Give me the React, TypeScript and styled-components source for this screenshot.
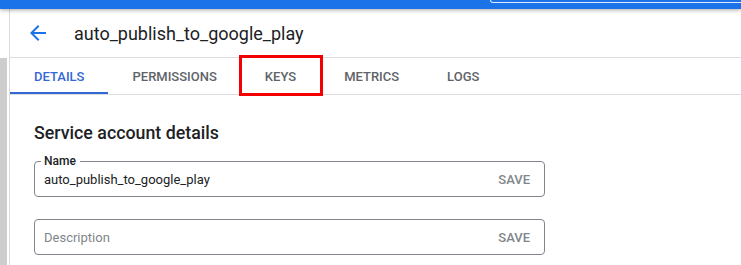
import React from 'react';
import styled, { createGlobalStyle } from 'styled-components';

const GlobalStyle = createGlobalStyle`
  html, body {
    margin: 0;
    padding: 0;
    background: #fff;
    font-family: Roboto, "Liberation Sans", Arial, sans-serif;
    color: #202124;
  }
  #root {
    height: 265px;
    overflow: hidden;
  }
`;

const Page = styled.div`
  display: flex;
  flex-direction: column;
  height: 265px;
`;

const TopBar = styled.div`
  position: relative;
  z-index: 2;
  display: flex;
  align-items: flex-start;
  height: 9px;
  padding-left: 490px;
  background: #1a73e8;
  box-shadow: 0 1px 4px rgba(0, 0, 0, 0.35);
`;

const SearchEdge = styled.div`
  flex: 1;
  height: 2px;
  border-left: 1px solid rgba(255, 255, 255, 0.85);
  border-bottom: 1px solid rgba(255, 255, 255, 0.85);
  border-bottom-left-radius: 6px;
`;

const Main = styled.div`
  display: flex;
  flex: 1;
  min-height: 0;
`;

const Rail = styled.div`
  display: flex;
  flex-direction: column;
  width: 9px;
  padding-top: 49px;
  border-right: 1px solid #dadce0;
`;

const RailScroll = styled.div`
  flex: 1;
  width: 7px;
  background: #cdcdcd;
`;

const Content = styled.div`
  flex: 1;
  display: flex;
  flex-direction: column;
`;

const Header = styled.div`
  display: flex;
  align-items: center;
  height: 48px;
  padding-left: 16px;
  border-bottom: 1px solid #dadce0;
`;

const BackButton = styled.button`
  display: flex;
  align-items: center;
  justify-content: center;
  width: 24px;
  height: 24px;
  padding: 0;
  margin-right: 24px;
  border: none;
  background: none;
  color: #1a73e8;
`;

const Title = styled.h1`
  margin: 0;
  font-size: 18px;
  font-weight: 400;
  color: #202124;
`;

const TabBar = styled.div`
  display: flex;
  height: 36px;
  border-bottom: 1px solid #dadce0;
`;

const Tab = styled.div<{ $active?: boolean; $marked?: boolean }>`
  position: relative;
  display: flex;
  align-items: center;
  padding: 0 24px;
  font-size: 13px;
  font-weight: 500;
  letter-spacing: 0;
  text-transform: uppercase;
  color: ${(p) => (p.$active ? '#3367d6' : '#5f6368')};
  box-shadow: ${(p) => (p.$active ? 'inset 0 -2px 0 #3367d6' : 'none')};

  ${(p) =>
    p.$marked &&
    `
    &::after {
      content: '';
      position: absolute;
      top: -3px;
      bottom: -2px;
      left: -2px;
      right: -3px;
      border: 3px solid #f40000;
    }
  `}
`;

const Body = styled.div`
  padding: 24px 24px 0;
`;

const SectionTitle = styled.h2`
  margin: 0 0 14px;
  font-size: 17.8px;
  line-height: 28px;
  font-weight: 500;
  color: #202124;
`;

const Fields = styled.div`
  display: flex;
  flex-direction: column;
  gap: 22px;
  width: 511px;
`;

const Field = styled.div`
  position: relative;
  display: flex;
  align-items: center;
  height: 34px;
  padding: 0 14px 0 9px;
  border: 1px solid #80868b;
  border-radius: 4px;
`;

const FloatLabel = styled.span`
  position: absolute;
  top: -8px;
  left: 6px;
  padding: 0 4px 0 3px;
  background: #fff;
  font-size: 12px;
  line-height: 14px;
  font-weight: 500;
  color: #202124;
`;

const Value = styled.span<{ $placeholder?: boolean }>`
  flex: 1;
  font-size: 13px;
  color: ${(p) => (p.$placeholder ? '#80868b' : '#202124')};
`;

const SaveButton = styled.span`
  font-size: 13px;
  font-weight: 500;
  color: #80868b;
`;

const tabs = ['Details', 'Permissions', 'Keys', 'Metrics', 'Logs'];

const App: React.FC = () => {
  return (
    <Page>
      <GlobalStyle />
      <TopBar>
        <SearchEdge />
      </TopBar>
      <Main>
        <Rail>
          <RailScroll />
        </Rail>
        <Content>
          <Header>
            <BackButton aria-label="Back">
              <svg width="24" height="24" viewBox="0 0 24 24" fill="currentColor">
                <path d="M20 11H7.83l5.59-5.59L12 4l-8 8 8 8 1.41-1.41L7.83 13H20v-2z" />
              </svg>
            </BackButton>
            <Title>auto_publish_to_google_play</Title>
          </Header>
          <TabBar>
            {tabs.map((t) => (
              <Tab key={t} $active={t === 'Details'} $marked={t === 'Keys'}>
                {t}
              </Tab>
            ))}
          </TabBar>
          <Body>
            <SectionTitle>Service account details</SectionTitle>
            <Fields>
              <Field>
                <FloatLabel>Name</FloatLabel>
                <Value>auto_publish_to_google_play</Value>
                <SaveButton>SAVE</SaveButton>
              </Field>
              <Field>
                <Value $placeholder>Description</Value>
                <SaveButton>SAVE</SaveButton>
              </Field>
            </Fields>
          </Body>
        </Content>
      </Main>
    </Page>
  );
};

export default App;
